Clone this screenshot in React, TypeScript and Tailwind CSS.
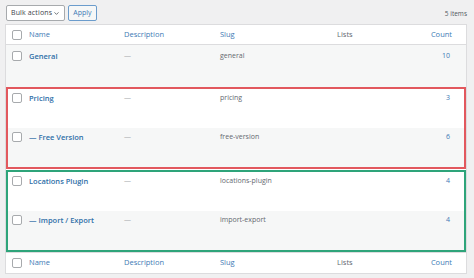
import { ChevronDown } from "lucide-react";

type Row = { name: string; slug: string; count: string; striped: boolean };

const font = { fontFamily: '"Open Sans", "Noto Sans", sans-serif' };

function Checkbox() {
  return <span className="block h-[10px] w-[10px] rounded-[2px] border border-[#a7aaad] bg-white" />;
}

function HeaderRow({ top }: { top?: boolean }) {
  return (
    <div className={`flex items-center bg-white text-[7.5px] ${top ? "h-[20px] border-b border-[#dcdcde]" : "h-[21px] border-t border-[#dcdcde]"}`}>
      <div className="w-[23px] pl-[6px]">
        <Checkbox />
      </div>
      <div className="w-[95px] text-[#3d7ab5]">Name</div>
      <div className="w-[96px] text-[#3d7ab5]">Description</div>
      <div className="w-[117px] text-[#3d7ab5]">Slug</div>
      <div className="flex-1 text-[#646970]">Lists</div>
      <div className="pr-[14px] text-[#3d7ab5]">Count</div>
    </div>
  );
}

function TermRow({ row, h, boxed }: { row: Row; h: string; boxed?: boolean }) {
  return (
    <div className={`flex items-start ${h} ${boxed ? "pt-[4px]" : "pt-[6px]"} ${row.striped ? "bg-[#f6f7f7]" : "bg-white"}`}>
      <div className={boxed ? "w-[21px] pl-[4px]" : "w-[23px] pl-[6px]"}>
        <Checkbox />
      </div>
      <div className="w-[95px] text-[7.5px] font-semibold leading-[10px] text-[#2f6fa8]">{row.name}</div>
      <div className="w-[96px] text-[7px] leading-[10px] text-[#a7aaad]">—</div>
      <div className="w-[117px] text-[7px] leading-[10px] text-[#646970]">{row.slug}</div>
      <div className="flex-1" />
      <div className={`${boxed ? "pr-[14px]" : "pr-[16px]"} text-[7px] leading-[10px] text-[#3d7ab5]`}>{row.count}</div>
    </div>
  );
}

export default function App() {
  const red: Row[] = [
    { name: "Pricing", slug: "pricing", count: "3", striped: false },
    { name: "— Free Version", slug: "free-version", count: "6", striped: true },
  ];
  const green: Row[] = [
    { name: "Locations Plugin", slug: "locations-plugin", count: "4", striped: false },
    { name: "— Import / Export", slug: "import-export", count: "4", striped: true },
  ];

  return (
    <div className="h-[278px] w-[474px] overflow-hidden bg-[#f0f0f1]" style={font}>
      <div className="flex h-[24px] items-start pt-[5px]">
        <div className="ml-[6px] flex h-[16px] w-[59px] items-center justify-between whitespace-nowrap rounded-[2px] border border-[#a7aaad] bg-white pl-[4px] pr-[4px] text-[7px] text-[#3c434a]">
          <span className="tracking-[0.15px]">Bulk actions</span>
          <ChevronDown size={7} strokeWidth={2.5} className="shrink-0 text-[#3c434a]" />
        </div>
        <div className="ml-[3px] flex h-[16px] w-[29px] items-center justify-center rounded-[2px] border border-[#6b9ccc] bg-[#f6f7f7] text-[7px] text-[#3d7ab5]">
          Apply
        </div>
        <div className="ml-auto mr-[7px] mt-[4px] text-[6.5px] text-[#50575e]">5 items</div>
      </div>

      <div className="ml-[5px] w-[462px] border border-[#dcdcde] bg-white">
        <HeaderRow top />
        <TermRow row={{ name: "General", slug: "general", count: "10", striped: true }} h="h-[42px]" />
        <div className="border-2 border-[#e2585e]">
          {red.map((r) => (
            <TermRow key={r.slug} row={r} h="h-[39px]" boxed />
          ))}
        </div>
        <div className="h-[1px] bg-white" />
        <div className="border-2 border-[#2ea47a]">
          {green.map((r) => (
            <TermRow key={r.slug} row={r} h="h-[39px]" boxed />
          ))}
        </div>
        <HeaderRow />
      </div>
    </div>
  );
}
